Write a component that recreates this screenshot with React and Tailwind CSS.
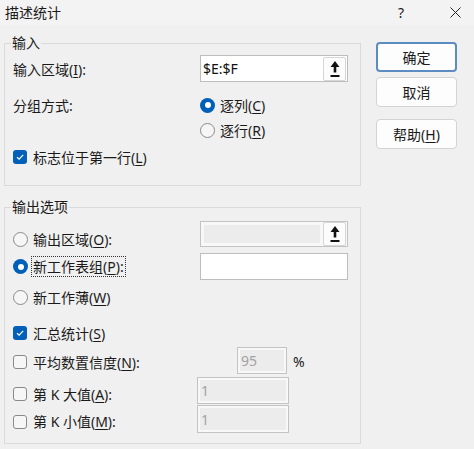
import React from "react";

const font = { fontFamily: '"Noto Sans", "Noto Sans CJK SC", sans-serif' };

function Radio({ checked }) {
  if (checked) {
    return (
      <span className="w-[15px] h-[15px] rounded-full bg-[#005fb8] flex items-center justify-center shrink-0">
        <span className="w-[6px] h-[6px] rounded-full bg-white" />
      </span>
    );
  }
  return <span className="w-[15px] h-[15px] rounded-full border border-[#8a8a8a] bg-[#f6f6f6] shrink-0" />;
}

function Check({ checked }) {
  if (checked) {
    return (
      <span className="w-[14px] h-[14px] rounded-[3px] bg-[#005fb8] flex items-center justify-center shrink-0">
        <svg width="10" height="10" viewBox="0 0 10 10">
          <path d="M2 5.2 L4.1 7.2 L8.2 2.8" fill="none" stroke="white" strokeWidth="1.2" />
        </svg>
      </span>
    );
  }
  return <span className="w-[14px] h-[14px] rounded-[3px] border border-[#8a8a8a] bg-[#f6f6f6] shrink-0" />;
}

function PickIcon() {
  return (
    <svg width="12" height="20" viewBox="0 0 12 20">
      <path d="M6 2 L10.5 8 L7.3 8 L7.3 13.5 L4.7 13.5 L4.7 8 L1.5 8 Z" fill="#111" />
      <rect x="1.5" y="16" width="9" height="2" fill="#111" />
    </svg>
  );
}

function RefBox({ value, disabled }) {
  return (
    <div className={`w-[148px] h-full border flex items-center ${disabled ? "border-[#c3c3c3] bg-[#f8f8f8]" : "border-[#bdbdbd] bg-white"}`}>
      <div className={`flex-1 h-full flex items-center ${disabled ? "p-[3px]" : "pl-[2px]"}`}>
        {disabled ? (
          <div className="w-full h-full bg-[#ececec]" />
        ) : (
          <span className="text-[14px] text-[#111]">{value}</span>
        )}
      </div>
      <div className="w-[23px] h-[24px] mr-[1px] border border-[#d6d6d6] rounded-[2px] bg-[#fcfcfc] flex items-center justify-center">
        <PickIcon />
      </div>
    </div>
  );
}

function NumBox({ value, w }) {
  return (
    <div className={`${w} h-full border border-[#c3c3c3] bg-[#f8f8f8] p-[2px]`}>
      <div className="w-full h-full bg-[#ececec] flex items-center pl-[1px] text-[14px] text-[#a3a3a3]">{value}</div>
    </div>
  );
}

function U({ children }) {
  return <u className="underline underline-offset-[2px] decoration-1">{children}</u>;
}

function Btn({ children, focus }) {
  return (
    <div
      className={`w-[81px] h-[30px] rounded-[4px] flex items-center justify-center text-[14px] text-[#1a1a1a] bg-[#fdfdfd] ${
        focus ? "border-2 border-[#5b8cc2]" : "border border-[#d3d3d3]"
      }`}
    >
      {children}
    </div>
  );
}

export default function App() {
  return (
    <div className="w-[474px] h-[449px] bg-[#f0f0f0] text-[#1a1a1a] overflow-hidden" style={font}>
      {/* title bar */}
      <div className="h-[25px] bg-[#f3f3f3] flex items-center pl-[5px] pr-[13px] text-[14px]">
        <span>描述统计</span>
        <span className="ml-auto mr-[46px]">?</span>
        <svg width="11" height="11" viewBox="0 0 11 11">
          <path d="M0.5 0.5 L10.5 10.5 M10.5 0.5 L0.5 10.5" stroke="#222" strokeWidth="1" />
        </svg>
      </div>

      <div className="flex pl-[4px]">
        <div className="w-[357px] shrink-0">
          {/* input group */}
          <fieldset className="mt-[10px] border border-[#dadada] px-0 pb-[18px]">
            <legend className="ml-[6px] px-[1px] text-[14px] leading-[16px]">输入</legend>
            <div className="pl-[8px] text-[14px]">
              <div className="mt-[4px] h-[27px] flex items-center">
                <div className="w-[187px] shrink-0 pt-[2px]">
                  输入区域(<U>I</U>):
                </div>
                <RefBox value="$E:$F" />
              </div>
              <div className="mt-[13px] h-[20px] flex items-center">
                <div className="w-[187px] shrink-0">分组方式:</div>
                <Radio checked />
                <span className="ml-[5px]">
                  逐列(<U>C</U>)
                </span>
              </div>
              <div className="mt-[5px] h-[20px] flex items-center">
                <div className="w-[187px] shrink-0" />
                <Radio />
                <span className="ml-[5px]">
                  逐行(<U>R</U>)
                </span>
              </div>
              <div className="mt-[7px] h-[20px] flex items-center">
                <Check checked />
                <span className="ml-[6px]">
                  标志位于第一行(<U>L</U>)
                </span>
              </div>
            </div>
          </fieldset>

          {/* output group */}
          <fieldset className="mt-[13px] border border-[#dadada] px-0 pb-[10px]">
            <legend className="ml-[6px] px-[1px] text-[14px] leading-[16px]">输出选项</legend>
            <div className="pl-[8px] text-[14px]">
              <div className="mt-[6px] h-[26px] flex items-center">
                <div className="w-[187px] shrink-0 flex items-center pt-[10px]">
                  <Radio />
                  <span className="ml-[5px]">
                    输出区域(<U>O</U>):
                  </span>
                </div>
                <RefBox disabled />
              </div>
              <div className="mt-[6px] h-[27px] flex items-center">
                <div className="w-[187px] shrink-0 flex items-center">
                  <Radio checked />
                  <span className="ml-[3px] px-[1px] border border-dotted border-[#333] leading-[19px]">
                    新工作表组(<U>P</U>):
                  </span>
                </div>
                <div className="w-[148px] h-full border border-[#bdbdbd] bg-white" />
              </div>
              <div className="mt-[7px] h-[20px] flex items-center">
                <Radio />
                <span className="ml-[5px]">
                  新工作薄(<U>W</U>)
                </span>
              </div>
              <div className="mt-[16px] h-[20px] flex items-center">
                <Check checked />
                <span className="ml-[6px]">
                  汇总统计(<U>S</U>)
                </span>
              </div>
              <div className="mt-[4px] h-[27px] flex items-center">
                <div className="w-[224px] shrink-0 flex items-center pt-[3px]">
                  <Check />
                  <span className="ml-[6px]">
                    平均数置信度(<U>N</U>):
                  </span>
                </div>
                <NumBox value="95" w="w-[50px]" />
                <span className="ml-[6px] pt-[1px]">%</span>
              </div>
              <div className="mt-[3px] h-[27px] flex items-center">
                <div className="w-[184px] shrink-0 flex items-center pt-[7px]">
                  <Check />
                  <span className="ml-[6px]">
                    第 K 大值(<U>A</U>):
                  </span>
                </div>
                <NumBox value="1" w="w-[92px]" />
              </div>
              <div className="mt-[1px] h-[28px] flex items-center">
                <div className="w-[184px] shrink-0 flex items-center pt-[5px]">
                  <Check />
                  <span className="ml-[6px]">
                    第 K 小值(<U>M</U>):
                  </span>
                </div>
                <NumBox value="1" w="w-[92px]" />
              </div>
            </div>
          </fieldset>
        </div>

        {/* buttons */}
        <div className="ml-[15px] mt-[17px] flex flex-col">
          <Btn focus>确定</Btn>
          <div className="mt-[5px]">
            <Btn>取消</Btn>
          </div>
          <div className="mt-[12px]">
            <Btn>
              帮助(<U>H</U>)
            </Btn>
          </div>
        </div>
      </div>
    </div>
  );
}
